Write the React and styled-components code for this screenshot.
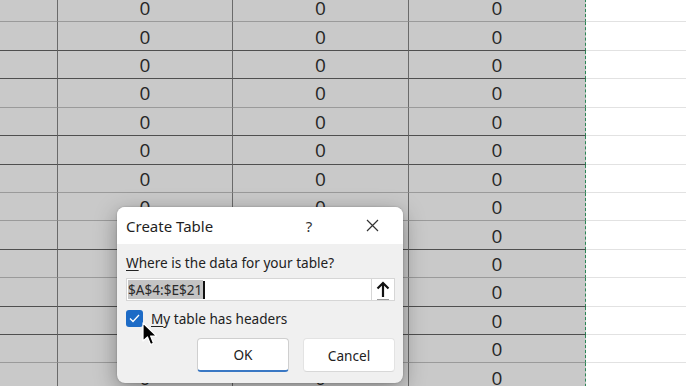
import React from "react";
import styled, { createGlobalStyle } from "styled-components";

const Global = createGlobalStyle`
  html, body { margin: 0; padding: 0; background: #ffffff; overflow: hidden; }
  body { width: 686px; height: 386px; font-family: "Noto Sans", "Open Sans", sans-serif; }
`;

const Page = styled.div`
  position: relative;
  width: 686px;
  height: 386px;
  overflow: hidden;
`;

const Sheet = styled.div`
  margin-top: -6px;
  display: flex;
  flex-direction: column;
`;

const Row = styled.div`
  display: grid;
  grid-template-columns: 58px 175px 176px 177px 1fr;
  height: 28.43px;
`;

const Cell = styled.div`
  box-sizing: border-box;
  background: ${(p) => (p.$outside ? "#ffffff" : "#c9c9c9")};
  border-bottom: 1px solid
    ${(p) => (p.$outside ? "#e2e2e2" : p.$strong ? "#4f4f4f" : "#9a9a9a")};
  border-right: ${(p) =>
    p.$edge
      ? "1.5px dashed #2b8656"
      : p.$outside
      ? "none"
      : "1px solid #6a6a6a"};
  display: flex;
  align-items: center;
  justify-content: center;
  padding-top: 1px;
  font-family: "Open Sans", "Noto Sans", sans-serif;
  font-size: 19px;
  color: #262626;
`;

const Dialog = styled.div`
  position: absolute;
  left: 117px;
  top: 207px;
  width: 286px;
  height: 176px;
  border-radius: 8px;
  overflow: hidden;
  background: #f0f0f0;
  box-shadow: 0 6px 22px rgba(0, 0, 0, 0.35), 0 0 2px rgba(0, 0, 0, 0.25);
  display: flex;
  flex-direction: column;
  font-family: "Noto Sans", "Open Sans", sans-serif;
  color: #1f1f1f;
`;

const TitleBar = styled.div`
  height: 37px;
  background: #ffffff;
  display: flex;
  align-items: center;
  padding: 0 0 0 9px;
  font-size: 15px;
`;

const Title = styled.div`
  flex: 1;
  margin-top: 1px;
`;

const TitleBtn = styled.div`
  width: ${(p) => p.$w}px;
  display: flex;
  justify-content: center;
  align-items: center;
  font-size: 15px;
  color: #333;
`;

const Body = styled.div`
  flex: 1;
  padding: 10px 8px 0 9px;
  display: flex;
  flex-direction: column;
`;

const Label = styled.div`
  font-size: 13.6px;
  line-height: 18px;
  color: #222;
`;

const U = styled.span`
  text-decoration: underline;
  text-underline-offset: 2px;
`;

const InputRow = styled.div`
  margin-top: 6px;
  height: 23px;
  display: flex;
  box-sizing: border-box;
  border: 1px solid #d6d6d6;
  background: #ffffff;
`;

const InputField = styled.div`
  flex: 1;
  display: flex;
  align-items: center;
  padding-left: 1px;
  font-size: 13.6px;
`;

const Selected = styled.span`
  background: #c4c4c4;
  color: #2a2a2a;
  line-height: 19px;
  padding-right: 1px;
`;

const Caret = styled.span`
  display: inline-block;
  width: 2px;
  height: 18px;
  background: #111;
`;

const PickBtn = styled.div`
  width: 23px;
  box-sizing: border-box;
  border-left: 1px solid #d6d6d6;
  display: flex;
  align-items: center;
  justify-content: center;
`;

const CheckRow = styled.div`
  margin-top: 8px;
  display: flex;
  align-items: center;
  gap: 8px;
  font-size: 13.6px;
  color: #222;
`;

const Box = styled.div`
  width: 17px;
  height: 17px;
  border-radius: 3px;
  background: #1d6bc6;
  display: flex;
  align-items: center;
  justify-content: center;
`;

const Buttons = styled.div`
  margin-top: 10px;
  display: flex;
  justify-content: flex-end;
  gap: 14px;
`;

const Button = styled.div`
  width: ${(p) => p.$w}px;
  height: 34px;
  box-sizing: border-box;
  border-radius: 4px;
  background: #ffffff;
  border: 1px solid ${(p) => (p.$primary ? "#cfcfcf" : "#e3e3e3")};
  border-bottom: ${(p) => (p.$primary ? "2px solid #3a78c4" : "1px solid #d8d8d8")};
  display: flex;
  align-items: center;
  justify-content: center;
  font-size: 13.6px;
  color: #222;
`;

const Pointer = styled.svg`
  position: absolute;
  left: 142px;
  top: 322px;
`;

const strong = [false, true, true, false, true, true, false, false, true, false, true, true, false, true];

export default function App() {
  return (
    <Page>
      <Global />
      <Sheet>
        {strong.map((s, i) => (
          <Row key={i}>
            <Cell $strong={s} />
            <Cell $strong={s}>0</Cell>
            <Cell $strong={s}>0</Cell>
            <Cell $strong={s} $edge>0</Cell>
            <Cell $outside />
          </Row>
        ))}
      </Sheet>

      <Dialog>
        <TitleBar>
          <Title>Create Table</Title>
          <TitleBtn $w={64}>?</TitleBtn>
          <TitleBtn $w={62}>
            <svg width="13" height="13" viewBox="0 0 13 13">
              <path d="M1 1 L12 12 M12 1 L1 12" stroke="#333" strokeWidth="1.2" fill="none" />
            </svg>
          </TitleBtn>
        </TitleBar>
        <Body>
          <Label>
            <U>W</U>here is the data for your table?
          </Label>
          <InputRow>
            <InputField>
              <Selected>$A$4:$E$21</Selected>
              <Caret />
            </InputField>
            <PickBtn>
              <svg width="16" height="20" viewBox="0 0 16 20">
                <path d="M8 17 V3 M2.5 8.5 L8 3 L13.5 8.5" stroke="#111" strokeWidth="2.2" fill="none" />
                <path d="M2 19.5 H14" stroke="#9a9a9a" strokeWidth="1" />
              </svg>
            </PickBtn>
          </InputRow>
          <CheckRow>
            <Box>
              <svg width="11" height="9" viewBox="0 0 11 9">
                <path d="M1 4.5 L4 7.5 L10 1" stroke="#fff" strokeWidth="1.3" fill="none" />
              </svg>
            </Box>
            <span>
              <U>M</U>y table has headers
            </span>
          </CheckRow>
          <Buttons>
            <Button $w={92} $primary>OK</Button>
            <Button $w={92}>Cancel</Button>
          </Buttons>
        </Body>
      </Dialog>

      <Pointer width="18" height="26" viewBox="0 0 18 26">
        <path d="M1 1 L1 19 L5.5 15 L8.5 22.5 L11.5 21.2 L8.6 14 L14.5 14 Z" fill="#000" stroke="#fff" strokeWidth="1.2" strokeLinejoin="round" />
      </Pointer>
    </Page>
  );
}
